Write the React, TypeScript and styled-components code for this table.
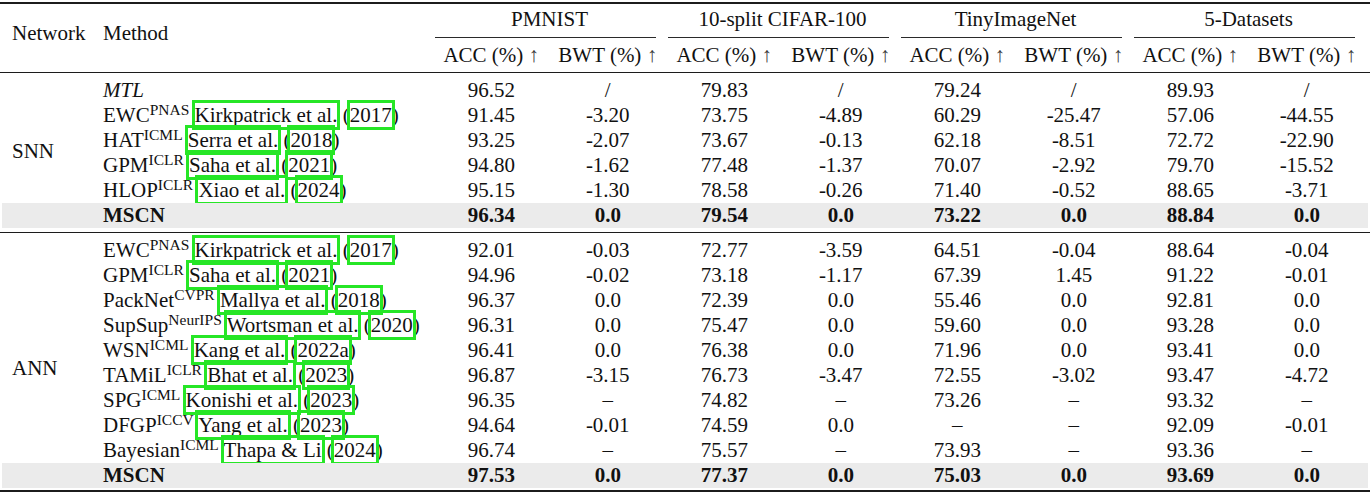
import React from "react";
import styled, { createGlobalStyle } from "styled-components";

const GlobalStyle = createGlobalStyle`
  html, body {
    margin: 0;
    padding: 0;
    background: #ffffff;
    overflow: hidden;
  }
  body {
    font-family: "Liberation Serif", "Times New Roman", serif;
    color: #111111;
  }
`;

const Table = styled.div`
  width: 1370px;
  padding-top: 2px;
  font-size: 21px;
  line-height: 25px;
`;

const Rule = styled.div<{ $weight: number }>`
  height: ${(p) => p.$weight}px;
  background: #1c1c1c;
`;

const HeaderBlock = styled.div`
  display: grid;
  grid-template-columns: 103px 330px 932px;
  padding: 3px 0 4px;
`;

const HeaderLabel = styled.div<{ $indent: number }>`
  align-self: center;
  padding-left: ${(p) => p.$indent}px;
  padding-bottom: 8px;
  white-space: nowrap;
`;

const DatasetGroups = styled.div`
  display: flex;
`;

const DatasetGroup = styled.div`
  width: 233px;
  display: flex;
  flex-direction: column;
`;

const DatasetTitle = styled.div`
  text-align: center;
  white-space: nowrap;
`;

const CMidRule = styled.div`
  height: 1px;
  background: #2a2a2a;
  margin: 5px 10px 5px 2px;
`;

const MetricRow = styled.div`
  display: grid;
  grid-template-columns: 116.5px 116.5px;
`;

const Metric = styled.div`
  text-align: center;
  white-space: nowrap;
`;

const Arrow = styled.span`
  font-family: "Liberation Serif", "DejaVu Serif", serif;
  color: #3a3a3a;
`;

const Group = styled.div<{ $bottom: number }>`
  display: grid;
  grid-template-columns: 103px 1fr;
  padding: 5px 0 ${(p) => p.$bottom}px;
`;

const GroupLabel = styled.div<{ $shift: number }>`
  align-self: center;
  padding-left: 12px;
  padding-top: ${(p) => Math.max(p.$shift, 0)}px;
  padding-bottom: ${(p) => Math.max(-p.$shift, 0)}px;
`;

const Rows = styled.div`
  display: flex;
  flex-direction: column;
  margin-right: 2px;
`;

const Row = styled.div<{ $highlight?: boolean }>`
  display: grid;
  grid-template-columns: 330px repeat(8, 116.5px);
  height: 25px;
  background: ${(p) => (p.$highlight ? "#ebebeb" : "transparent")};
  box-shadow: ${(p) => (p.$highlight ? "-101px 0 0 0 #ebebeb" : "none")};
  font-weight: ${(p) => (p.$highlight ? 700 : 400)};
`;

const MethodCell = styled.div<{ $italic?: boolean }>`
  white-space: nowrap;
  font-style: ${(p) => (p.$italic ? "italic" : "normal")};
`;

const Venue = styled.span`
  font-size: 15.5px;
  line-height: 0;
  vertical-align: 7px;
`;

const CiteLink = styled.span`
  outline: 3px solid #26e626;
  outline-offset: 0;
`;

const ValueCell = styled.div`
  text-align: center;
  white-space: nowrap;
`;

type Method = {
  name: string;
  venue?: string;
  authors?: string;
  year?: string;
  values: string[];
  italic?: boolean;
  highlight?: boolean;
};

const datasets = ["PMNIST", "10-split CIFAR-100", "TinyImageNet", "5-Datasets"];

const snn: Method[] = [
  { name: "MTL", italic: true, values: ["96.52", "/", "79.83", "/", "79.24", "/", "89.93", "/"] },
  { name: "EWC", venue: "PNAS", authors: "Kirkpatrick et al.", year: "2017", values: ["91.45", "-3.20", "73.75", "-4.89", "60.29", "-25.47", "57.06", "-44.55"] },
  { name: "HAT", venue: "ICML", authors: "Serra et al.", year: "2018", values: ["93.25", "-2.07", "73.67", "-0.13", "62.18", "-8.51", "72.72", "-22.90"] },
  { name: "GPM", venue: "ICLR", authors: "Saha et al.", year: "2021", values: ["94.80", "-1.62", "77.48", "-1.37", "70.07", "-2.92", "79.70", "-15.52"] },
  { name: "HLOP", venue: "ICLR", authors: "Xiao et al.", year: "2024", values: ["95.15", "-1.30", "78.58", "-0.26", "71.40", "-0.52", "88.65", "-3.71"] },
  { name: "MSCN", highlight: true, values: ["96.34", "0.0", "79.54", "0.0", "73.22", "0.0", "88.84", "0.0"] },
];

const ann: Method[] = [
  { name: "EWC", venue: "PNAS", authors: "Kirkpatrick et al.", year: "2017", values: ["92.01", "-0.03", "72.77", "-3.59", "64.51", "-0.04", "88.64", "-0.04"] },
  { name: "GPM", venue: "ICLR", authors: "Saha et al.", year: "2021", values: ["94.96", "-0.02", "73.18", "-1.17", "67.39", "1.45", "91.22", "-0.01"] },
  { name: "PackNet", venue: "CVPR", authors: "Mallya et al.", year: "2018", values: ["96.37", "0.0", "72.39", "0.0", "55.46", "0.0", "92.81", "0.0"] },
  { name: "SupSup", venue: "NeurIPS", authors: "Wortsman et al.", year: "2020", values: ["96.31", "0.0", "75.47", "0.0", "59.60", "0.0", "93.28", "0.0"] },
  { name: "WSN", venue: "ICML", authors: "Kang et al.", year: "2022a", values: ["96.41", "0.0", "76.38", "0.0", "71.96", "0.0", "93.41", "0.0"] },
  { name: "TAMiL", venue: "ICLR", authors: "Bhat et al.", year: "2023", values: ["96.87", "-3.15", "76.73", "-3.47", "72.55", "-3.02", "93.47", "-4.72"] },
  { name: "SPG", venue: "ICML", authors: "Konishi et al.", year: "2023", values: ["96.35", "–", "74.82", "–", "73.26", "–", "93.32", "–"] },
  { name: "DFGP", venue: "ICCV", authors: "Yang et al.", year: "2023", values: ["94.64", "-0.01", "74.59", "0.0", "–", "–", "92.09", "-0.01"] },
  { name: "Bayesian", venue: "ICML", authors: "Thapa & Li", year: "2024", values: ["96.74", "–", "75.57", "–", "73.93", "–", "93.36", "–"] },
  { name: "MSCN", highlight: true, values: ["97.53", "0.0", "77.37", "0.0", "75.03", "0.0", "93.69", "0.0"] },
];

function MethodRow({ m }: { m: Method }) {
  return (
    <Row $highlight={m.highlight}>
      <MethodCell $italic={m.italic}>
        {m.name}
        {m.venue && <Venue>{m.venue}</Venue>}
        {m.authors && (
          <>
            {" "}
            <CiteLink>{m.authors}</CiteLink> (<CiteLink>{m.year}</CiteLink>)
          </>
        )}
      </MethodCell>
      {m.values.map((v, i) => (
        <ValueCell key={i}>{v}</ValueCell>
      ))}
    </Row>
  );
}

function NetworkGroup({ label, methods, shift, bottom }: { label: string; methods: Method[]; shift: number; bottom: number }) {
  return (
    <Group $bottom={bottom}>
      <GroupLabel $shift={shift}>{label}</GroupLabel>
      <Rows>
        {methods.map((m, i) => (
          <MethodRow key={i} m={m} />
        ))}
      </Rows>
    </Group>
  );
}

export default function App() {
  return (
    <>
      <GlobalStyle />
      <Table>
        <Rule $weight={2} />
        <HeaderBlock>
          <HeaderLabel $indent={12}>Network</HeaderLabel>
          <HeaderLabel $indent={0}>Method</HeaderLabel>
          <DatasetGroups>
            {datasets.map((d) => (
              <DatasetGroup key={d}>
                <DatasetTitle>{d}</DatasetTitle>
                <CMidRule />
                <MetricRow>
                  <Metric>
                    ACC (%) <Arrow>↑</Arrow>
                  </Metric>
                  <Metric>
                    BWT (%) <Arrow>↑</Arrow>
                  </Metric>
                </MetricRow>
              </DatasetGroup>
            ))}
          </DatasetGroups>
        </HeaderBlock>
        <Rule $weight={1} />
        <NetworkGroup label="SNN" methods={snn} shift={-3} bottom={4} />
        <Rule $weight={1} />
        <NetworkGroup label="ANN" methods={ann} shift={11} bottom={2} />
        <Rule $weight={2} />
      </Table>
    </>
  );
}
